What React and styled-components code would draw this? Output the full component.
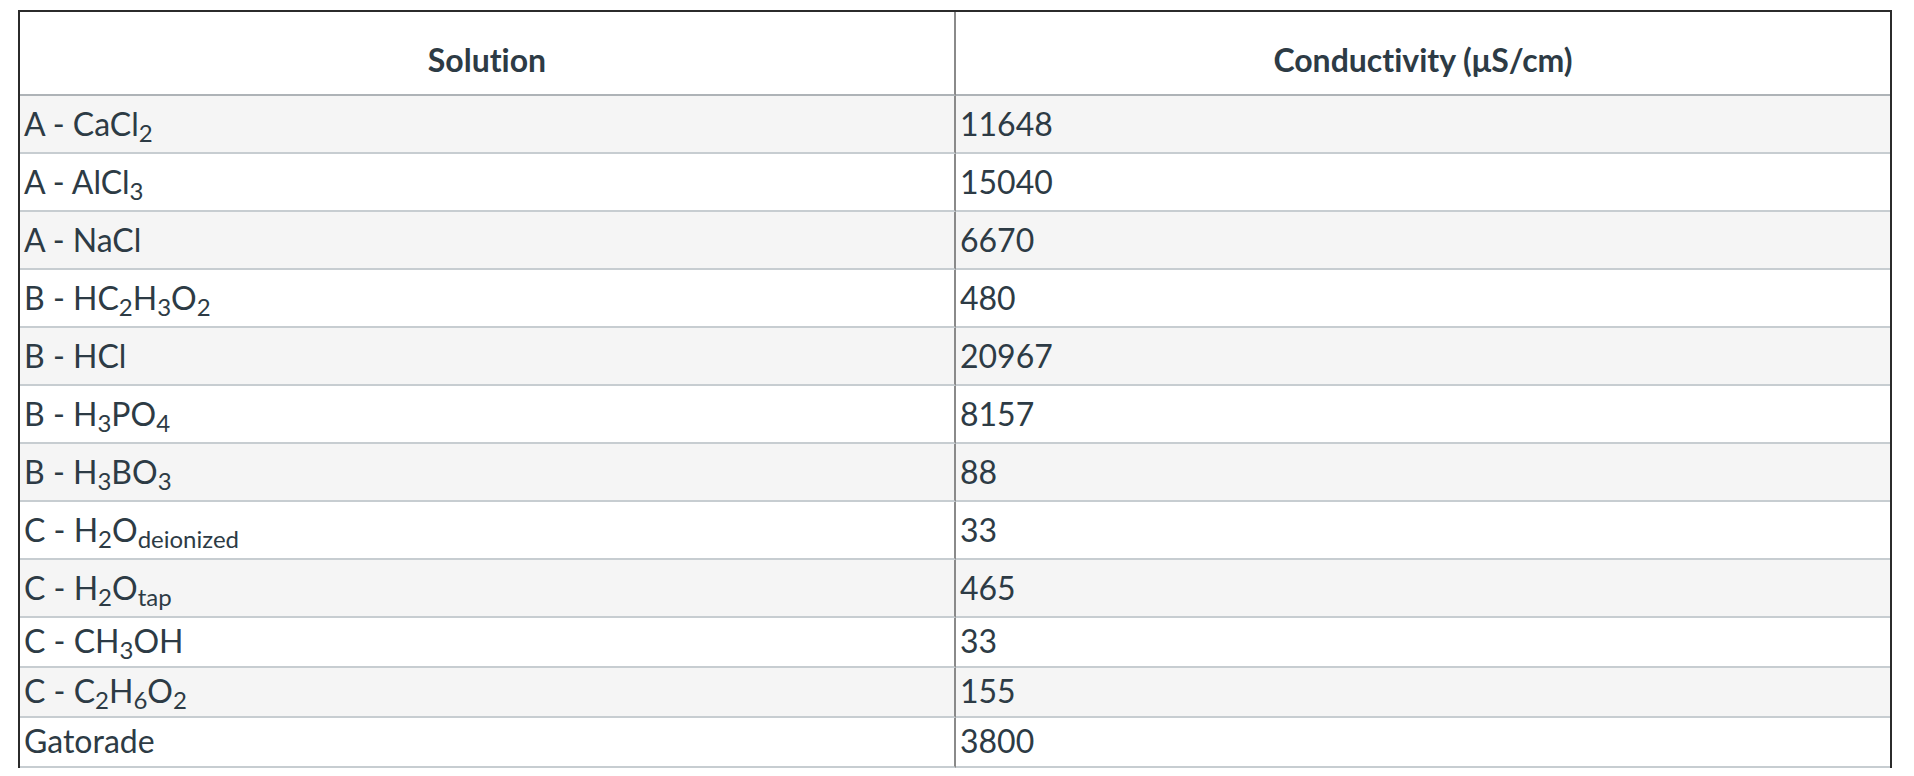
import React from "react";
import styled, { createGlobalStyle } from "styled-components";

const GlobalStyle = createGlobalStyle`
  html, body {
    margin: 0;
    padding: 0;
    background: #ffffff;
  }
  body {
    font-family: Lato, "Open Sans", "Liberation Sans", sans-serif;
    color: #2d3b45;
  }
`;

const Page = styled.div`
  padding: 10px 22px 0 18px;
`;

const Table = styled.table`
  width: 100%;
  table-layout: fixed;
  border-collapse: separate;
  border-spacing: 0;
  border-top: 2px solid #2b2b2b;
  border-left: 2px solid #2b2b2b;
  border-right: 2px solid #2b2b2b;
  font-family: Lato, "Open Sans", "Liberation Sans", sans-serif;
  font-size: 32px;
  line-height: 38px;
  font-variant-ligatures: none;
  font-feature-settings: "liga" 0, "clig" 0;
  color: #2d3b45;
`;

const FirstCol = styled.col`
  width: 936px;
`;

const HeadCell = styled.th`
  box-sizing: border-box;
  padding: 29px 4px 15px;
  font-weight: 700;
  text-align: center;
  background: #ffffff;
  border-bottom: 2px solid #aeb3b7;
  border-right: ${(p) => (p.$divider ? "2px solid #8a8a8a" : "none")};
`;

const Row = styled.tr`
  background: ${(p) => (p.$striped ? "#f5f5f5" : "#ffffff")};
`;

const Cell = styled.td`
  box-sizing: border-box;
  padding: ${(p) => (p.$short ? "4px 4px 6px" : "9px 4px 9px")};
  text-align: left;
  font-weight: 400;
  white-space: nowrap;
  border-bottom: 2px solid #c7cdd1;
  border-right: ${(p) => (p.$divider ? "2px solid #8a8a8a" : "none")};
`;

const Sub = styled.sub`
  font-size: 75%;
  line-height: 0;
  position: relative;
  vertical-align: baseline;
  bottom: -0.25em;
`;

const rows = [
  { name: <>A - CaCl<Sub>2</Sub></>, value: "11648" },
  { name: <>A - AlCl<Sub>3</Sub></>, value: "15040" },
  { name: <>A - NaCl</>, value: "6670" },
  { name: <>B - HC<Sub>2</Sub>H<Sub>3</Sub>O<Sub>2</Sub></>, value: "480" },
  { name: <>B - HCl</>, value: "20967" },
  { name: <>B - H<Sub>3</Sub>PO<Sub>4</Sub></>, value: "8157" },
  { name: <>B - H<Sub>3</Sub>BO<Sub>3</Sub></>, value: "88" },
  { name: <>C - H<Sub>2</Sub>O<Sub>deionized</Sub></>, value: "33" },
  { name: <>C - H<Sub>2</Sub>O<Sub>tap</Sub></>, value: "465" },
  { name: <>C - CH<Sub>3</Sub>OH</>, value: "33", short: true },
  { name: <>C - C<Sub>2</Sub>H<Sub>6</Sub>O<Sub>2</Sub></>, value: "155", short: true },
  { name: <>Gatorade</>, value: "3800", short: true },
];

export default function App() {
  return (
    <>
      <GlobalStyle />
      <Page>
        <Table>
          <colgroup>
            <FirstCol />
            <col />
          </colgroup>
          <thead>
            <tr>
              <HeadCell $divider>Solution</HeadCell>
              <HeadCell>Conductivity (μS/cm)</HeadCell>
            </tr>
          </thead>
          <tbody>
            {rows.map((r, i) => (
              <Row key={i} $striped={i % 2 === 0}>
                <Cell $divider $short={r.short}>{r.name}</Cell>
                <Cell $short={r.short}>{r.value}</Cell>
              </Row>
            ))}
          </tbody>
        </Table>
      </Page>
    </>
  );
}
